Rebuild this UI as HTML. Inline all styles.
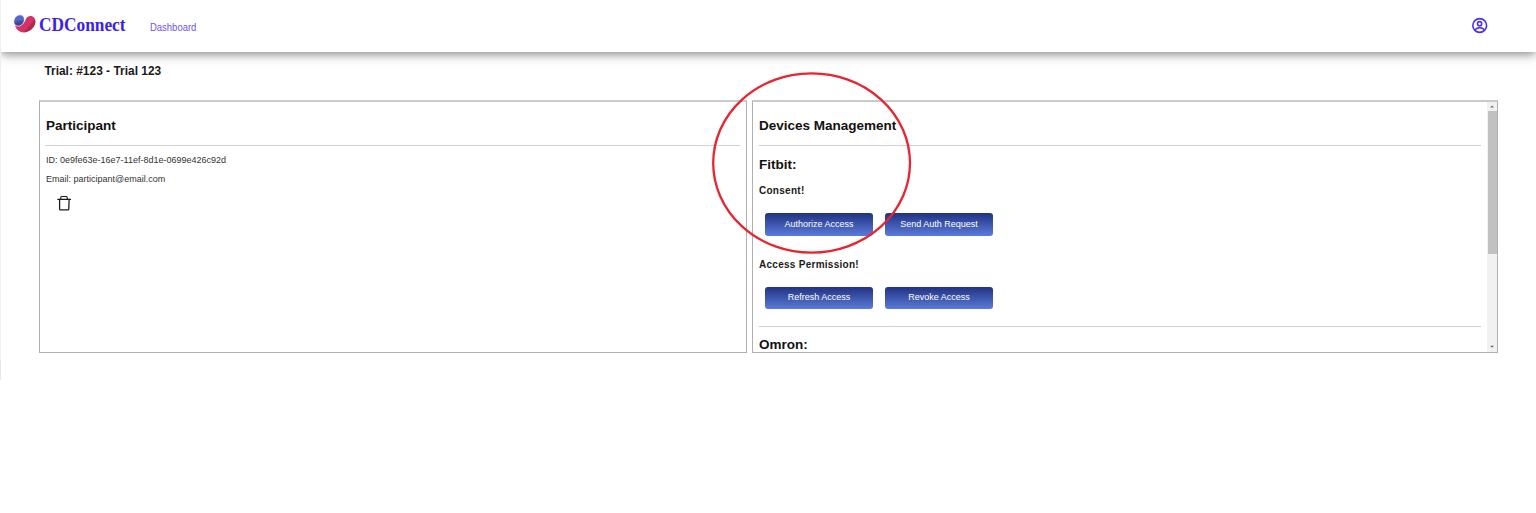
<!DOCTYPE html>
<html><head><meta charset="utf-8">
<style>
*{box-sizing:border-box;margin:0;padding:0}
html,body{width:1536px;height:513px;background:#fff;overflow:hidden;font-family:"Liberation Sans",sans-serif;color:#111}
.abs{position:absolute}
#edge{left:0;top:0;width:1px;height:380px;background:#efefef}
#edgeg{left:0;top:360px;width:1px;height:20px;background:#dcefdc}
#hdr{left:1px;top:0;width:1535px;height:52px;background:#fff;box-shadow:0 2px 10px rgba(0,0,0,0.5)}
#brand{left:38.6px;top:12.5px;font-family:"Liberation Serif",serif;font-weight:bold;font-size:19.5px;color:#3a1ef0;line-height:24px;white-space:nowrap;transform:scaleX(0.888);transform-origin:0 0}
#dash{left:149.8px;top:22px;font-size:10.2px;color:#6a55f0;line-height:12px;transform:scaleX(0.93);transform-origin:0 0;white-space:nowrap}
#trial{left:44.4px;top:64px;font-size:11.95px;font-weight:bold;line-height:14px;color:#1a1a1a}
.panel{border:1px solid #b0b0b0;border-top:2px solid #cacaca;background:#fff}
#p1{left:39px;top:100px;width:708px;height:253px}
#p2{left:752px;top:100px;width:746px;height:253px;overflow:hidden}
.h{font-size:13.5px;font-weight:bold;line-height:16px;white-space:nowrap}
.hr{height:1px;background:#d2d2d2}
.sm{font-size:9px;line-height:11px;white-space:nowrap;color:#333}
.b10{font-size:10px;font-weight:bold;line-height:12px;white-space:nowrap;letter-spacing:0.27px;color:#1a1a1a}
.btn{height:22px;width:108px;border-radius:3px;background:linear-gradient(#213282,#5b7bda);color:#fff;font-size:9px;line-height:21.5px;text-align:center;white-space:nowrap}
#sb{left:1487px;top:102px;width:10px;height:250px;background:#f1f1f1}
#thumb{left:1488px;top:111px;width:9px;height:143px;background:#c1c1c1}
</style></head><body>
<div class="abs" id="hdr"></div>
<div class="abs" id="edge"></div>
<div class="abs" id="edgeg"></div>
<svg class="abs" style="left:8px;top:8px" width="32" height="30" viewBox="0 0 32 30">
  <defs>
    <linearGradient id="gb" gradientUnits="userSpaceOnUse" x1="9.8" y1="10.6" x2="13.8" y2="15.0"><stop offset="0.25" stop-color="#5868c8"/><stop offset="0.75" stop-color="#3a4896"/></linearGradient>
    <linearGradient id="gr" gradientUnits="userSpaceOnUse" x1="19.3" y1="15.9" x2="23.5" y2="19.4"><stop offset="0.3" stop-color="#d5326a"/><stop offset="0.7" stop-color="#b0294c"/></linearGradient>
  </defs>
  <path d="M7.2 18.1 C9 17.8 12.5 17.2 14.7 15.7 C16 14.8 16.8 13.2 17.7 11.4 C18.5 9.5 20 8 22.5 8 C25.5 8 27.5 10.5 27.5 13.6 C27.5 19.5 21.5 24.5 16 24.5 C11.5 24.5 8.2 21.5 7.2 18.1 Z" fill="url(#gr)"/>
  <ellipse cx="11.1" cy="12.5" rx="5.0" ry="6.0" transform="rotate(35 11.1 12.5)" fill="url(#gb)" stroke="#fff" stroke-width="0.6"/>
</svg>
<div class="abs" id="brand">CDConnect</div>
<div class="abs" id="dash">Dashboard</div>
<svg class="abs" style="left:1464px;top:10px" width="32" height="32" viewBox="0 0 32 32" fill="none" stroke="#4a2ff2" stroke-width="1.6">
  <circle cx="15.7" cy="15.5" r="6.9"/>
  <circle cx="15.6" cy="13.7" r="2.1"/>
  <path d="M10.5 20.3 Q15.7 15.0 20.9 20.3"/>
</svg>
<div class="abs" id="trial">Trial: #123 - Trial 123</div>

<div class="abs panel" id="p1"></div>
<div class="abs h" style="left:46px;top:118px">Participant</div>
<div class="abs hr" style="left:45px;top:145px;width:695px"></div>
<div class="abs sm" style="left:46px;top:155px">ID: 0e9fe63e-16e7-11ef-8d1e-0699e426c92d</div>
<div class="abs sm" style="left:46px;top:174px">Email: participant@email.com</div>
<svg class="abs" style="left:50px;top:188px" width="30" height="30" viewBox="0 0 30 30" fill="none" stroke="#1a1a1a" stroke-width="1.25" stroke-linecap="round" stroke-linejoin="round">
  <path d="M7.8 11.3 H20.5"/>
  <path d="M10.8 11 V9.5 Q10.8 8.5 11.8 8.5 H16.2 Q17.2 8.5 17.2 9.5 V11" stroke-width="1.1"/>
  <path d="M9.6 11.3 V20.9 Q9.6 21.8 10.6 21.8 H17.8 Q18.8 21.8 18.8 20.9 L19.1 11.3"/>
</svg>

<div class="abs panel" id="p2"></div>
<div class="abs h" style="left:759px;top:118px">Devices Management</div>
<div class="abs hr" style="left:759px;top:145px;width:722px"></div>
<div class="abs h" style="left:759px;top:157px">Fitbit:</div>
<div class="abs b10" style="left:759px;top:184.7px">Consent!</div>
<div class="abs btn" style="left:765px;top:213px;height:23px;line-height:22.5px">Authorize Access</div>
<div class="abs btn" style="left:885px;top:213px;height:23px;line-height:22.5px">Send Auth Request</div>
<div class="abs b10" style="left:759px;top:258.8px">Access Permission!</div>
<div class="abs btn" style="left:765px;top:287px">Refresh Access</div>
<div class="abs btn" style="left:885px;top:287px">Revoke Access</div>
<div class="abs hr" style="left:759px;top:326px;width:722px"></div>
<div style="position:absolute;left:753px;top:102px;width:734px;height:250px;overflow:hidden">
  <div class="abs h" style="left:6px;top:235.3px">Omron:</div>
</div>
<div class="abs" id="sb"></div>
<div class="abs" id="thumb"></div>
<svg class="abs" style="left:1487px;top:102px" width="10" height="250" viewBox="0 0 10 250" fill="#6a6a6a">
  <path d="M3.2 5.6 L5.1 3.6 L7 5.6 Z"/>
  <path d="M3.2 243.8 L7 243.8 L5.1 245.8 Z"/>
</svg>

<svg class="abs" style="left:0;top:0" width="1536" height="513">
  <ellipse cx="811.6" cy="163" rx="98.4" ry="89.7" fill="none" stroke="#e82430" stroke-width="2.3"/>
</svg>
</body></html>
